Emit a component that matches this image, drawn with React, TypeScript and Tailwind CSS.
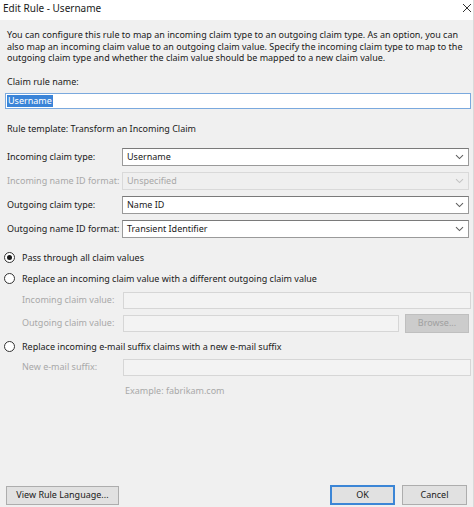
import React from 'react';

const font = { fontFamily: '"Noto Sans", "Open Sans", sans-serif' };

// small chevron used by the combo boxes
const Chevron = ({ disabled = false }: { disabled?: boolean }) => (
  <svg width="9" height="6" viewBox="0 0 9 6" className="shrink-0">
    <path d="M1 1.2 L4.5 4.6 L8 1.2" fill="none" stroke={disabled ? '#c4c4c4' : '#606060'} strokeWidth="1.1" />
  </svg>
);

const Radio = ({ checked = false }: { checked?: boolean }) => (
  <span className="w-[11px] h-[11px] rounded-full border border-[#333333] bg-white flex items-center justify-center shrink-0">
    {checked && <span className="w-[5px] h-[5px] rounded-full bg-[#1a1a1a]" />}
  </span>
);

interface SelectRowProps {
  label: string;
  value: string;
  disabled?: boolean;
}

const SelectRow = ({ label, value, disabled = false }: SelectRowProps) => (
  <div className="flex items-center h-[18px]">
    <div className={`w-[115px] shrink-0 whitespace-nowrap ${disabled ? 'text-[#a8a8a8]' : 'text-[#1a1a1a]'}`}>{label}</div>
    <div
      className={`flex-1 h-full mr-[2px] flex items-center justify-between pl-[4px] pr-[4px] border ${
        disabled ? 'border-[#d9d9d9] bg-[#efefef] text-[#a8a8a8]' : 'border-[#9a9a9a] border-t-[#7a7a7a] bg-white text-[#1a1a1a]'
      }`}
    >
      <span>{value}</span>
      <Chevron disabled={disabled} />
    </div>
  </div>
);

const DisabledInput = ({ className = '' }: { className?: string }) => (
  <div className={`h-[17px] border border-[#d6d6d6] bg-[#f3f3f3] ${className}`} />
);

export default function App() {
  return (
    <div className="w-[474px] h-[507px] bg-[#f0f0f0] flex flex-col text-[9px] leading-[11.5px] overflow-hidden border-r border-[#dadada]" style={font}>
      {/* title bar */}
      <div className="h-[20px] bg-white flex items-center justify-between pl-[3px] pr-[1px] shrink-0">
        <span className="text-[10px] text-[#1a1a1a] mb-[2px]">Edit Rule - Username</span>
        <svg width="10" height="10" viewBox="0 0 10 10" className="mb-[4px]">
          <path d="M1 1 L9 9 M9 1 L1 9" stroke="#333333" strokeWidth="1" />
        </svg>
      </div>

      <div className="flex-1 flex flex-col pl-[7px] pr-[2px] pt-[9px] pb-[2px] text-[#1a1a1a] whitespace-nowrap">
        <p>
          You can configure this rule to map an incoming claim type to an outgoing claim type. As an option, you can
          <br />
          also map an incoming claim value to an outgoing claim value. Specify the incoming claim type to map to the
          <br />
          outgoing claim type and whether the claim value should be mapped to a new claim value.
        </p>

        <div className="mt-[12px]">Claim rule name:</div>
        <div className="mt-[6px] -ml-[2px] h-[16px] border border-[#7aa9de] bg-white flex items-center pl-[1px]">
          <span className="bg-[#3a84d8] text-white px-[1px] leading-[12px]">Username</span>
        </div>

        <div className="mt-[14px]">Rule template: Transform an Incoming Claim</div>

        <div className="mt-[13px] flex flex-col gap-[6px]">
          <SelectRow label="Incoming claim type:" value="Username" />
          <SelectRow label="Incoming name ID format:" value="Unspecified" disabled />
          <SelectRow label="Outgoing claim type:" value="Name ID" />
          <SelectRow label="Outgoing name ID format:" value="Transient Identifier" />
        </div>

        {/* radio options */}
        <div className="mt-[13px] -ml-[3px] flex flex-col">
          <label className="flex items-center gap-[7px] h-[14px]">
            <Radio checked />
            <span>Pass through all claim values</span>
          </label>
          <label className="mt-[7px] flex items-center gap-[7px] h-[14px]">
            <Radio />
            <span>Replace an incoming claim value with a different outgoing claim value</span>
          </label>

          <div className="mt-[6px] flex items-center pl-[18px] text-[#a8a8a8]">
            <span className="w-[101px] shrink-0">Incoming claim value:</span>
            <DisabledInput className="flex-1" />
          </div>
          <div className="mt-[5px] flex items-center pl-[18px] text-[#a8a8a8]">
            <span className="w-[101px] shrink-0">Outgoing claim value:</span>
            <DisabledInput className="flex-1" />
            <div className="ml-[6px] mr-[2px] w-[64px] h-[19px] bg-[#cccccc] border border-[#bfbfbf] flex items-center justify-center text-[#a0a0a0]">
              Browse...
            </div>
          </div>

          <label className="mt-[7px] flex items-center gap-[7px] h-[14px]">
            <Radio />
            <span>Replace incoming e-mail suffix claims with a new e-mail suffix</span>
          </label>
          <div className="mt-[5px] flex items-center pl-[18px] text-[#a8a8a8]">
            <span className="w-[101px] shrink-0">New e-mail suffix:</span>
            <DisabledInput className="flex-1" />
          </div>
          <div className="mt-[9px] pl-[121px] text-[#a8a8a8]">Example: fabrikam.com</div>
        </div>

        <div className="flex-1" />

        {/* footer buttons */}
        <div className="flex items-center -ml-[1px] pr-[4px]">
          <button className="w-[113px] h-[19px] bg-[#e1e1e1] border border-[#adadad] text-[#1a1a1a]">View Rule Language...</button>
          <div className="flex-1" />
          <button className="w-[65px] h-[20px] bg-[#e1e1e1] border-2 border-[#3c86d6] text-[#1a1a1a]">OK</button>
          <button className="ml-[7px] w-[65px] h-[20px] bg-[#e1e1e1] border border-[#adadad] text-[#1a1a1a]">Cancel</button>
        </div>
      </div>
    </div>
  );
}
